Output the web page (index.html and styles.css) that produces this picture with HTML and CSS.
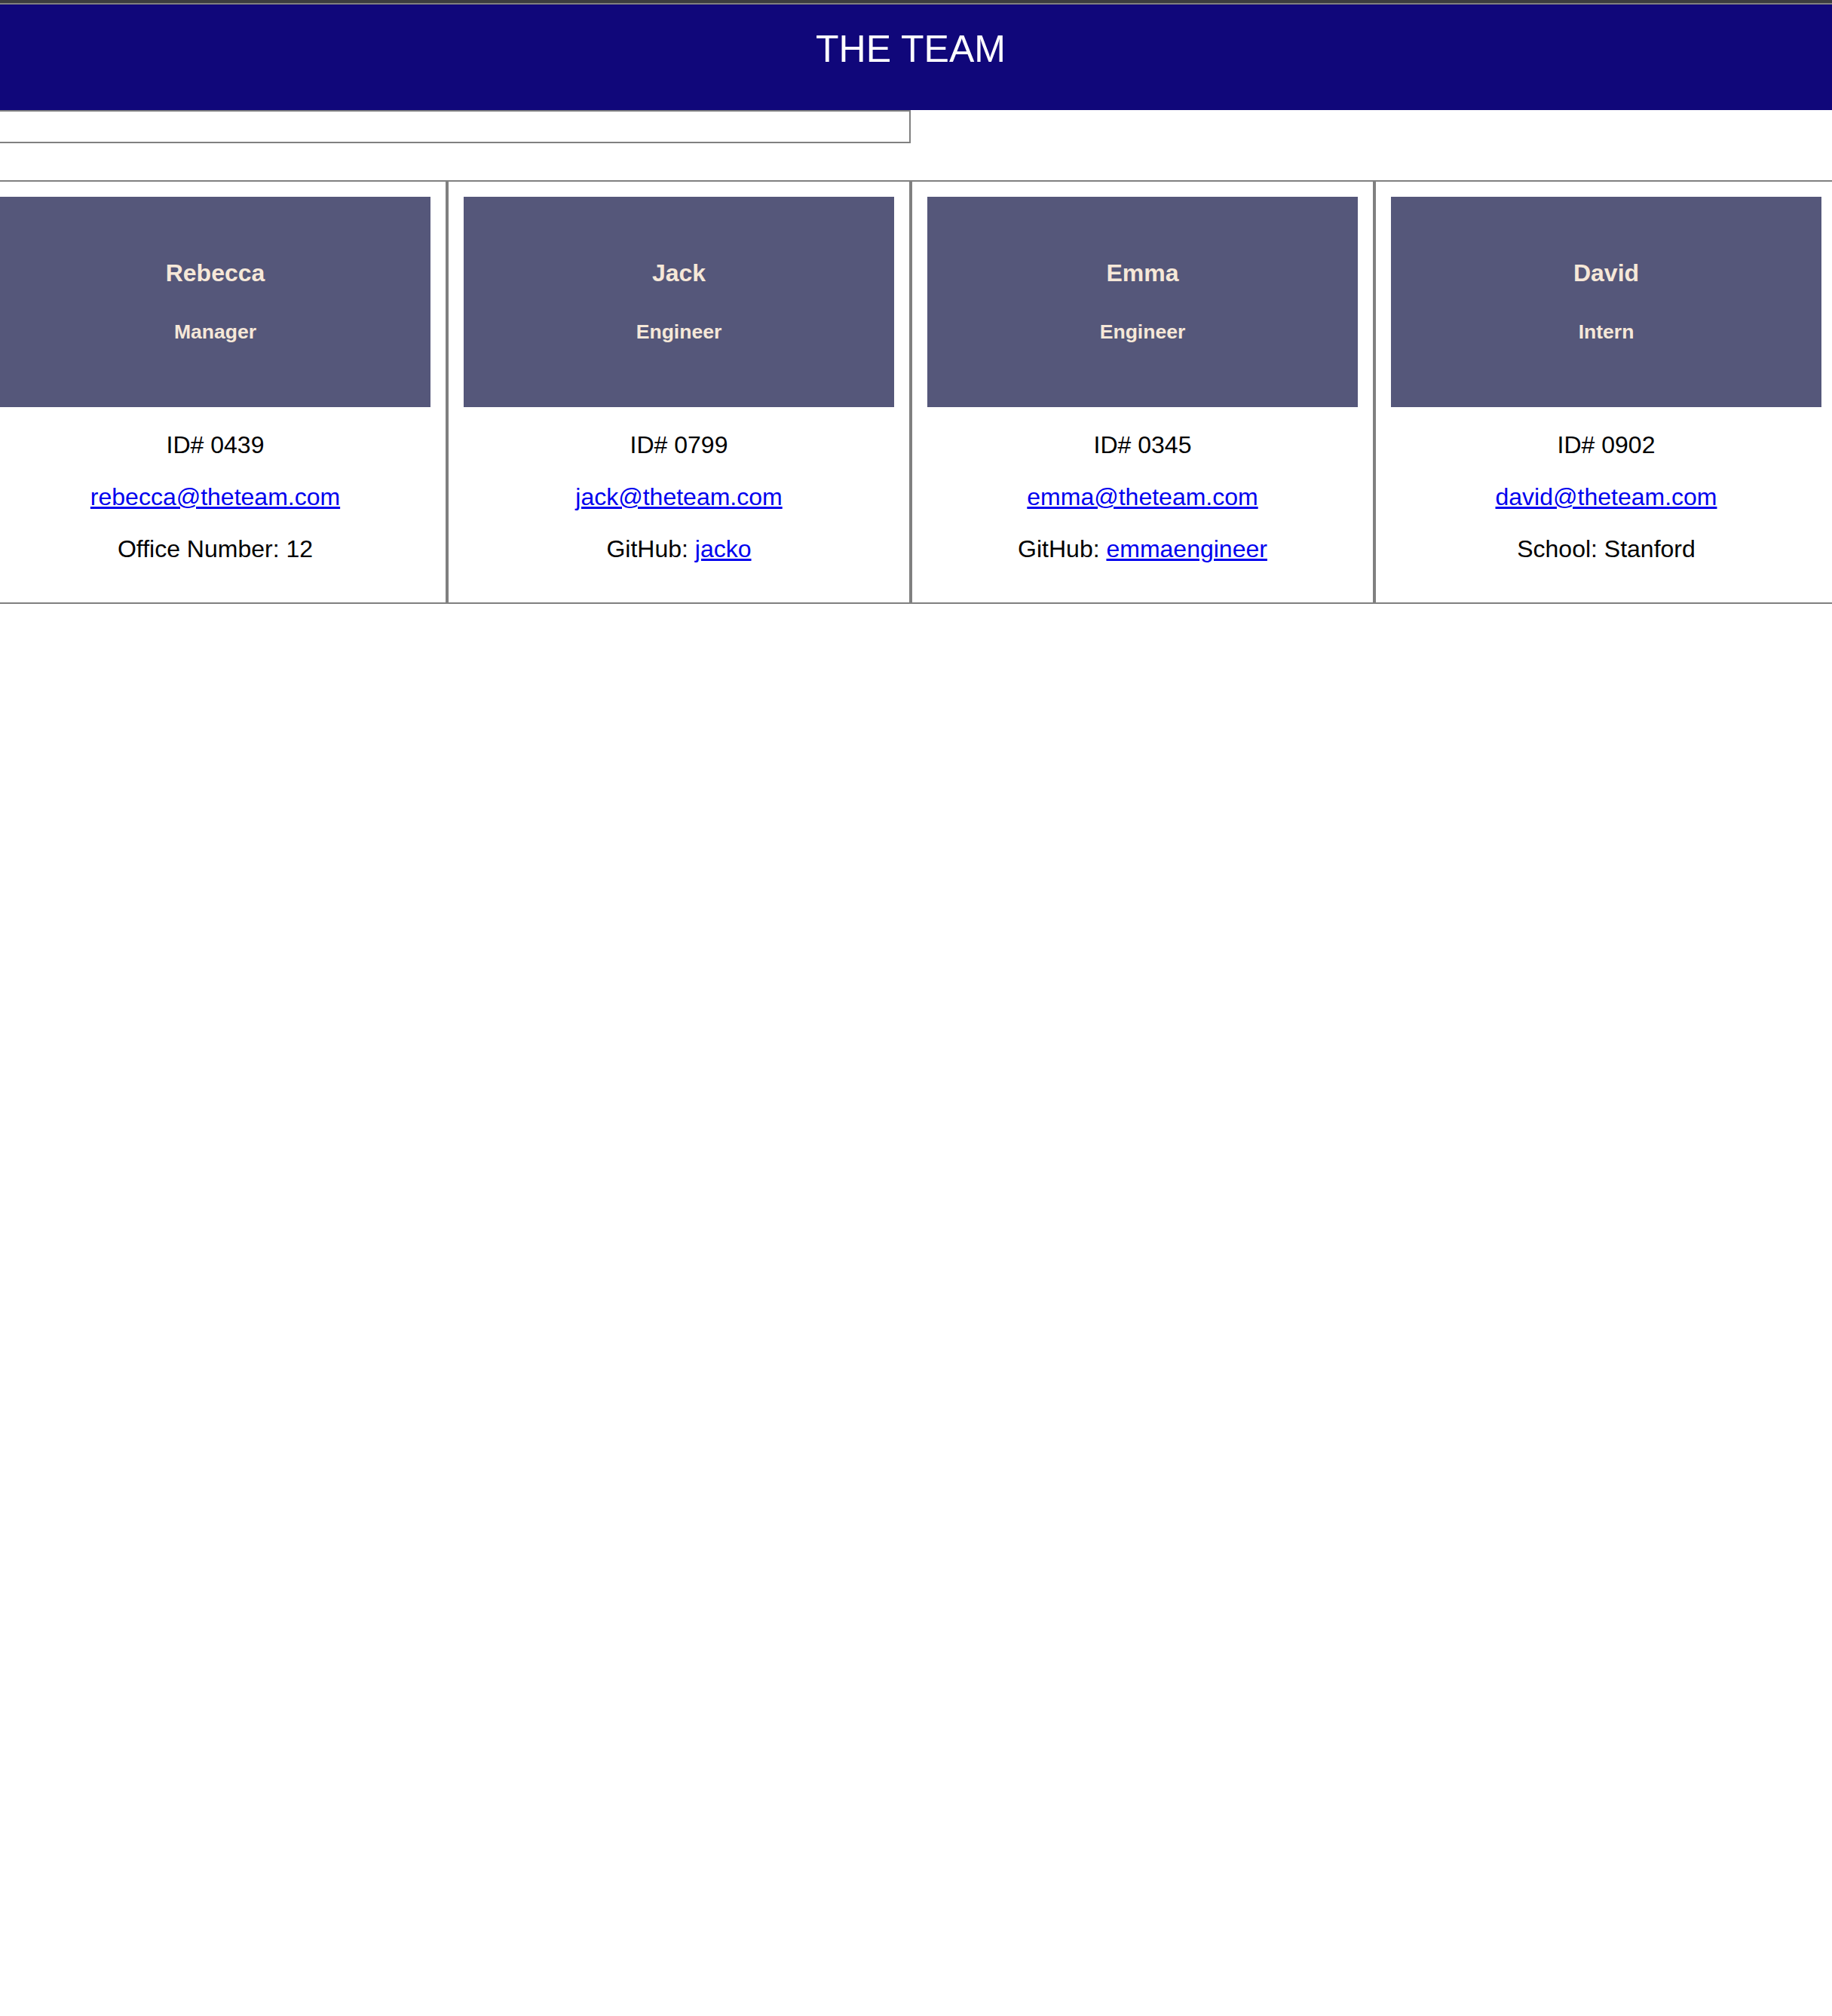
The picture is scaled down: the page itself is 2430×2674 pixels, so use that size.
FILE: index.html
```html
<!DOCTYPE html>
<html lang="en">
<head>
<meta charset="utf-8">
<title>The Team</title>
<link rel="stylesheet" href="styles.css">
</head>
<body>
<div class="topbar"></div>
<header class="hero">
  <h1 class="hero-title">THE TEAM</h1>
</header>
<div class="spacer-box"></div>
<main class="cards">
  <section class="card">
    <div class="card-head">
      <h4 class="card-name">Rebecca</h4>
      <h5 class="card-role">Manager</h5>
    </div>
    <p class="card-line">ID# 0439</p>
    <p class="card-line"><a href="mailto:rebecca@theteam.com">rebecca@theteam.com</a></p>
    <p class="card-line">Office Number: 12</p>
  </section>
  <section class="card">
    <div class="card-head">
      <h4 class="card-name">Jack</h4>
      <h5 class="card-role">Engineer</h5>
    </div>
    <p class="card-line">ID# 0799</p>
    <p class="card-line"><a href="mailto:jack@theteam.com">jack@theteam.com</a></p>
    <p class="card-line">GitHub: <a href="#">jacko</a></p>
  </section>
  <section class="card">
    <div class="card-head">
      <h4 class="card-name">Emma</h4>
      <h5 class="card-role">Engineer</h5>
    </div>
    <p class="card-line">ID# 0345</p>
    <p class="card-line"><a href="mailto:emma@theteam.com">emma@theteam.com</a></p>
    <p class="card-line">GitHub: <a href="#">emmaengineer</a></p>
  </section>
  <section class="card">
    <div class="card-head">
      <h4 class="card-name">David</h4>
      <h5 class="card-role">Intern</h5>
    </div>
    <p class="card-line">ID# 0902</p>
    <p class="card-line"><a href="mailto:david@theteam.com">david@theteam.com</a></p>
    <p class="card-line">School: Stanford</p>
  </section>
</main>
</body>
</html>
```
FILE: styles.css
```css
html, body {
  overflow-x: hidden;
}
body {
  margin: 0;
  background: #ffffff;
  font-family: "Liberation Sans", Arial, sans-serif;
  color: #000000;
}
.topbar {
  height: 4px;
  background: #3c3d3f;
}
.hero {
  border-top: 2px solid #808080;
  background: #10077a;
  height: 110px;
  padding: 30px 14px 0 0;
  text-align: center;
}
.hero-title {
  margin: 0;
  font-size: 50px;
  font-weight: normal;
  color: #ffffff;
  line-height: normal;
}
.spacer-box {
  box-sizing: border-box;
  width: 1210px;
  height: 44px;
  margin-left: -2px;
  border: 2px solid #808080;
}
.cards {
  display: flex;
  margin-top: 49px;
  margin-left: -22px;
  width: 2460px;
}
.card {
  flex: none;
  box-sizing: border-box;
  width: 615px;
  border: 2px solid #808080;
  padding: 20px;
  text-align: center;
  font-size: 32px;
}
.card-head {
  background: #55577a;
  padding: 40px;
  color: #f6e8d8;
}
.card-name {
  margin: 42.56px 0;
  font-size: 32px;
  font-weight: bold;
}
.card-role {
  margin: 44.36px 0;
  font-size: 26.56px;
  font-weight: bold;
}
.card-line {
  margin: 32px 0;
}
.card-line a {
  color: #0000ee;
  text-decoration: underline;
}
```
